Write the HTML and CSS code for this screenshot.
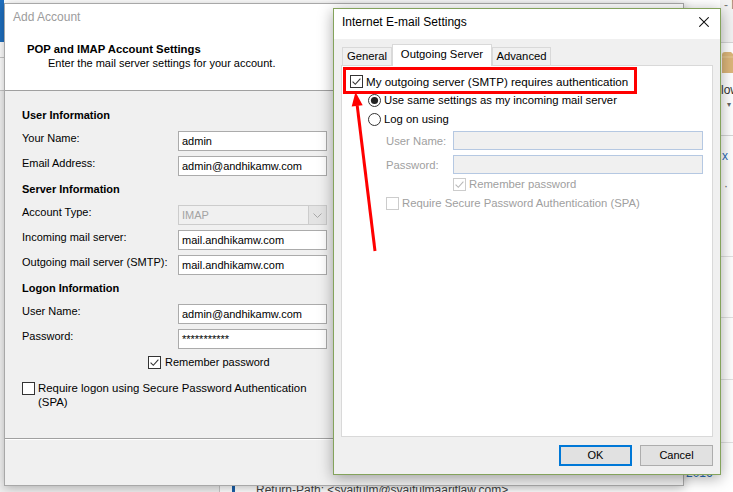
FILE: index.html
```html
<!DOCTYPE html>
<html lang="en">
<head>
<meta charset="utf-8">
<title>Internet E-mail Settings</title>
<link rel="stylesheet" href="styles.css">
</head>
<body>

<div class="app-left">
  <div class="al-blue"></div>
  <div class="al-seg s1"></div>
  <div class="al-seg s2"></div>
  <div class="al-rest"></div>
</div>

<div class="app-right">
  <div class="ar-title">- Microsoft Outlook</div>
  <div class="ar-ribbon">
    <svg class="ar-folder" width="14" height="24" viewBox="0 0 14 24"><path d="M3 3h6l2 2h3v19H0V6q0-3 3-3z" fill="#dcb67a"/><path d="M0 8h14" stroke="#e8cc98" stroke-width="1"/></svg>
    <div class="ar-low">low</div>
    <div class="ar-caret">&#9662;</div>
  </div>
  <div class="ar-nav">
    <div class="ar-x">x</div>
    <div class="ar-dot">&middot;</div>
  </div>
  <div class="ar-item i1"></div>
  <div class="ar-item i2"></div>
  <div class="ar-item i3"></div>
</div>

<div class="app-bottom">
  <div class="ab-folders"></div>
  <div class="ab-bar"></div>
  <div class="ab-text">Return-Path: &lt;syaifulm@syaifulmaariflaw.com&gt;</div>
</div>
<div class="app-date">2016</div>

<div class="add-account">
  <div class="aa-titlebar">Add Account</div>
  <div class="aa-header">
    <div class="aa-heading">POP and IMAP Account Settings</div>
    <div class="aa-sub">Enter the mail server settings for your account.</div>
  </div>
  <div class="aa-body">
    <div class="sec first">User Information</div>
    <div class="row"><span class="lbl">Your Name:</span><span class="field">admin</span></div>
    <div class="row"><span class="lbl">Email Address:</span><span class="field">admin@andhikamw.com</span></div>
    <div class="sec">Server Information</div>
    <div class="row"><span class="lbl">Account Type:</span>
      <span class="select"><span class="val">IMAP</span><span class="sel-btn"><svg width="9" height="5" viewBox="0 0 9 5"><path d="M.5.5l4 4 4-4" fill="none" stroke="#a8a8a8"/></svg></span></span>
    </div>
    <div class="row"><span class="lbl">Incoming mail server:</span><span class="field">mail.andhikamw.com</span></div>
    <div class="row"><span class="lbl">Outgoing mail server (SMTP):</span><span class="field">mail.andhikamw.com</span></div>
    <div class="sec">Logon Information</div>
    <div class="row"><span class="lbl">User Name:</span><span class="field">admin@andhikamw.com</span></div>
    <div class="row"><span class="lbl">Password:</span><span class="field pw">***********</span></div>
    <div class="check-row remember">
      <svg class="cb" width="13" height="13" viewBox="0 0 13 13"><rect x=".5" y=".5" width="12" height="12" fill="#fff" stroke="#333"/><path d="M2.6 6.6l2.7 2.7 5.1-5.6" fill="none" stroke="#333" stroke-width="1.1"/></svg>
      <span>Remember password</span>
    </div>
    <div class="check-row spa">
      <svg class="cb" width="13" height="13" viewBox="0 0 13 13"><rect x=".5" y=".5" width="12" height="12" fill="#fff" stroke="#333"/></svg>
      <span class="spa-txt">Require logon using Secure Password Authentication (SPA)</span>
    </div>
  </div>
  <div class="aa-footer"></div>
</div>

<div class="ies">
  <div class="ies-titlebar">
    <span>Internet E-mail Settings</span>
    <span class="ies-close"><svg width="10" height="10" viewBox="0 0 10 10"><path d="M.3.3l9.4 9.4M9.7.3L.3 9.7" stroke="#111" stroke-width="1.05"/></svg></span>
  </div>
  <div class="tabs">
    <div class="tab general">General</div>
    <div class="tab sel">Outgoing Server</div>
    <div class="tab adv">Advanced</div>
  </div>
  <div class="panel">
    <div class="p-auth">
      <svg class="cb" width="13" height="13" viewBox="0 0 13 13"><rect x=".5" y=".5" width="12" height="12" fill="#fff" stroke="#333"/><path d="M2.6 6.6l2.7 2.7 5.1-5.6" fill="none" stroke="#333" stroke-width="1.1"/></svg>
      <span>My outgoing server (SMTP) requires authentication</span>
    </div>
    <div class="p-radio">
      <svg class="rb" width="13" height="13" viewBox="0 0 13 13"><circle cx="6.5" cy="6.5" r="6" fill="#fff" stroke="#333"/><circle cx="6.5" cy="6.5" r="3.6" fill="#222"/></svg>
      <span>Use same settings as my incoming mail server</span>
    </div>
    <div class="p-radio">
      <svg class="rb" width="13" height="13" viewBox="0 0 13 13"><circle cx="6.5" cy="6.5" r="6" fill="#fff" stroke="#333"/></svg>
      <span>Log on using</span>
    </div>
    <div class="p-field first"><span class="lbl">User Name:</span><span class="dis-input"></span></div>
    <div class="p-field"><span class="lbl">Password:</span><span class="dis-input"></span></div>
    <div class="p-check p-remember">
      <svg class="cb" width="13" height="13" viewBox="0 0 13 13"><rect x=".5" y=".5" width="12" height="12" fill="#fff" stroke="#cccccc"/><path d="M2.6 6.6l2.7 2.7 5.1-5.6" fill="none" stroke="#b8b8b8" stroke-width="1.1"/></svg>
      <span>Remember password</span>
    </div>
    <div class="p-check p-spa">
      <svg class="cb" width="13" height="13" viewBox="0 0 13 13"><rect x=".5" y=".5" width="12" height="12" fill="#fff" stroke="#cccccc"/></svg>
      <span>Require Secure Password Authentication (SPA)</span>
    </div>
  </div>
  <div class="ies-buttons">
    <div class="btn default">OK</div>
    <div class="btn">Cancel</div>
  </div>
</div>

<div class="highlight"></div>
<svg class="arrow" width="733" height="492" viewBox="0 0 733 492">
  <path d="M375 251L357.2 105.5" stroke="#ff0000" stroke-width="3" fill="none"/>
  <path d="M355.5 92L362.7 105.2L351.7 106.6Z" fill="#ff0000"/>
</svg>

</body>
</html>
```

FILE: styles.css
```css
* { box-sizing: border-box; }
html, body { margin: 0; padding: 0; }
body {
  position: relative;
  width: 733px;
  height: 492px;
  overflow: hidden;
  background: #ffffff;
  font-family: "Liberation Sans", Arial, sans-serif;
  font-size: 11px;
  color: #000;
}

/* ---------- background application fragments ---------- */
.app-left {
  position: absolute; left: 0; top: 0; width: 4px; height: 485px;
  display: flex; flex-direction: column;
}
.al-blue { height: 42px; background: #1f6fbf; }
.al-seg { border-bottom: 1px solid #c8c8c8; }
.al-seg.s1 { height: 16px; }
.al-seg.s2 { height: 33px; }
.al-rest { flex: 1; background: #f3f3f3; }

.app-right {
  position: absolute; left: 720px; top: 0; width: 13px; height: 492px;
  display: flex; flex-direction: column; overflow: hidden;
}
.ar-title {
  height: 43px; background: #f3f3f3; border-bottom: 1px solid #d6d6d6;
  padding-left: 4px; font-size: 12px; line-height: 10px; color: #777; white-space: nowrap;
}
.ar-ribbon {
  height: 93px; border-bottom: 1px solid #d6d6d6; padding: 6px 0 0 2px; white-space: nowrap;
}
.ar-folder { display: block; }
.ar-low { font-size: 12px; line-height: 14px; color: #333; margin: 10px 0 0 -1px; }
.ar-caret { font-size: 8px; line-height: 10px; color: #666; margin: 3px 0 0 5px; }
.ar-nav { height: 121px; border-bottom: 1px solid #e1e1e1; padding: 13px 0 0 2px; }
.ar-x { font-size: 12px; line-height: 14px; color: #2b6cb8; }
.ar-dot { font-size: 12px; line-height: 14px; color: #666; margin: 16px 0 0 2px; }
.ar-item { border-bottom: 1px solid #e1e1e1; }
.ar-item.i1 { height: 61px; }
.ar-item.i2 { height: 62px; }
.ar-item.i3 { height: 63px; }

.app-bottom {
  position: absolute; left: 0; top: 485px; width: 733px; height: 7px;
  display: flex; overflow: hidden;
}
.ab-folders { width: 220px; background: #f0f0f0; border-right: 1px solid #c8c8c8; flex: none; }
.ab-bar { width: 3px; background: #1a5fa8; margin-left: 12px; flex: none; }
.ab-text {
  margin: -2px 0 0 21px; font-size: 12px; line-height: 14px; color: #444; white-space: nowrap;
}
.app-date {
  position: absolute; left: 686px; top: 466px;
  font-size: 12px; line-height: 14px; color: #2a6ebb;
}

/* ---------- Add Account dialog (inactive) ---------- */
.add-account {
  position: absolute; left: 4px; top: 3px; width: 680px; height: 483px;
  border: 1px solid #a8a8a8; background: #f0f0f0;
  box-shadow: 0 2px 10px rgba(0, 0, 0, 0.28);
  display: flex; flex-direction: column;
}
.aa-titlebar {
  height: 30px; flex: none; background: #fff;
  padding-left: 8px; font-size: 12px; line-height: 26px; color: #9c9c9c;
}
.aa-header {
  height: 57px; flex: none; background: #fff;
  border-bottom: 1px solid #a0a0a0; padding: 8px 0 0 22px;
}
.aa-heading { font-weight: bold; line-height: 14px; font-size: 11.3px; }
.aa-sub { line-height: 14px; padding-left: 21px; }
.aa-body { height: 347px; flex: none; padding: 17px 0 0 17px; }
.aa-footer { flex: 1; border-top: 1px solid #a0a0a0; box-shadow: inset 0 1px #ffffff; }

.sec { font-weight: bold; line-height: 14px; margin: 6px 0 9px; }
.sec.first { margin-top: 0; }
.row { display: flex; align-items: flex-start; height: 20px; margin-bottom: 5px; }
.row .lbl { width: 156px; line-height: 14px; flex: none; white-space: nowrap; }
.field {
  width: 149px; height: 20px; border: 1px solid #ababab; background: #fff;
  padding: 0 3px; line-height: 18px; white-space: nowrap; overflow: hidden;
}
.select {
  display: flex; width: 149px; height: 20px; border: 1px solid #cccccc;
  background: #f0f0f0; color: #a3a3a3; padding-left: 3px; line-height: 18px;
}
.select .val { flex: 1; }
.sel-btn {
  width: 18px; height: 18px; background: #e3e3e3; border-left: 1px solid #cccccc;
  display: flex; align-items: center; justify-content: center;
}

.check-row { display: flex; align-items: center; gap: 4px; line-height: 14px; }
.cb, .rb { display: block; flex: none; }
.remember { margin: 6px 0 0 126px; }
.spa { align-items: flex-start; gap: 3px; margin-top: 12px; }
.spa .cb { margin-top: 1px; }
.spa-txt { width: 289px; font-size: 11.4px; }

/* ---------- Internet E-mail Settings dialog (active) ---------- */
.ies {
  position: absolute; left: 333px; top: 8px; width: 388px; height: 467px;
  border: 1px solid #84a35c; background: #f0f0f0;
  box-shadow: 0 3px 14px rgba(0, 0, 0, 0.35);
  display: flex; flex-direction: column;
}
.ies-titlebar {
  height: 30px; flex: none; background: #fff;
  display: flex; justify-content: space-between;
  padding: 0 11px 0 8px; font-size: 12px; line-height: 26px;
}
.ies-close { display: flex; align-items: flex-start; padding-top: 8px; }

.tabs {
  display: flex; align-items: flex-end; height: 21px; flex: none;
  margin: 5px 0 0 8px; position: relative; z-index: 1;
}
.tab {
  height: 18px; border: 1px solid #d9d9d9; border-bottom: none;
  background: #f0f0f0; text-align: center; line-height: 17px; white-space: nowrap;
  font-size: 11.3px;
}
.tab.general { width: 50px; }
.tab.sel { width: 100px; height: 22px; margin-bottom: -1px; background: #fff; line-height: 19px; }
.tab.adv { width: 59px; }

.panel {
  width: 372px; height: 372px; flex: none; margin-left: 7px;
  border: 1px solid #d9d9d9; background: #fff; padding: 9px 0 0 8px;
  font-size: 11.3px;
}
.p-auth { display: flex; align-items: center; gap: 3px; height: 13px; line-height: 13px; font-size: 11.6px; }
.p-radio { display: flex; align-items: center; gap: 3px; height: 13px; line-height: 13px; margin: 6px 0 0 18px; }
.p-field { display: flex; align-items: center; height: 19px; margin: 5px 0 0 36px; }
.p-field .lbl { width: 67px; color: #a0a0a0; flex: none; }
.dis-input { width: 250px; height: 19px; border: 1px solid #b5c8e2; background: #f0f0f0; }
.p-check { display: flex; align-items: center; gap: 3px; height: 13px; line-height: 13px; color: #a0a0a0; }
.p-remember { margin: 4px 0 0 103px; }
.p-spa { margin: 6px 0 0 36px; }

.ies-buttons { display: flex; justify-content: flex-end; gap: 8px; padding: 8px 7px 0 0; }
.btn {
  width: 73px; height: 21px; border: 1px solid #adadad; background: #e1e1e1;
  text-align: center; line-height: 19px;
}
.btn.default { border: 2px solid #0078d7; line-height: 17px; }

/* ---------- annotation overlay ---------- */
.highlight {
  position: absolute; left: 343px; top: 67px; width: 294px; height: 27px;
  border: 3px solid #ff0000;
}
.arrow { position: absolute; left: 0; top: 0; pointer-events: none; }
```
